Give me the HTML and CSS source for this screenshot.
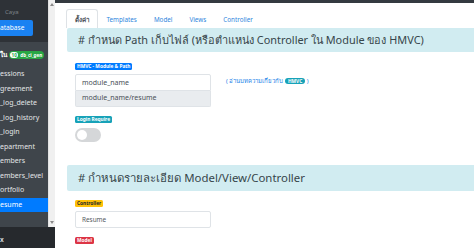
FILE: index.html
```html
<!DOCTYPE html>
<html lang="th">
<head>
  <meta charset="UTF-8">
  <title>HMVC Generator</title>
  <link rel="stylesheet" href="styles.css">
</head>
<body>
  <div class="app">
    <aside class="sidebar">
      <div class="side-scroll">
        <div class="side-main">
          <div class="brand">
            <div class="brand-name">Caya</div>
            <div class="db-btn">atabase</div>
          </div>
          <div class="menu">
            <div class="menu-head">ใน <span class="db-badge"><span class="pill">10</span>db_ci_gen</span></div>
            <a class="item" href="#">essions</a>
            <a class="item" href="#">greement</a>
            <a class="item" href="#">_log_delete</a>
            <a class="item" href="#">_log_history</a>
            <a class="item" href="#">_login</a>
            <a class="item" href="#">epartment</a>
            <a class="item" href="#">embers</a>
            <a class="item" href="#">embers_level</a>
            <a class="item" href="#">ortfolio</a>
            <a class="item active" href="#">esume</a>
          </div>
        </div>
        <div class="scrollbar">
          <span class="arrow up"></span>
          <span class="arrow down"></span>
        </div>
      </div>
      <div class="side-foot">x</div>
    </aside>

    <main class="main">
      <div class="topbar"></div>
      <div class="content">
        <nav class="tabs">
          <a class="tab active" href="#">ตั้งค่า</a>
          <a class="tab" href="#">Templates</a>
          <a class="tab" href="#">Model</a>
          <a class="tab" href="#">Views</a>
          <a class="tab" href="#">Controller</a>
        </nav>

        <h3 class="alert">#&nbsp;กำหนด Path เก็บไฟล์ (หรือตำแหน่ง Controller ใน Module ของ HMVC)</h3>

        <div class="group first">
          <span class="badge blue">HMVC - Module &amp; Path</span>
          <div class="field-row">
            <div class="input-stack">
              <div class="input">module_name</div>
              <div class="input readonly">module_name/resume</div>
            </div>
            <a class="read-link" href="#">( อ่านบทความเกี่ยวกับ <span class="badge teal pillish">HMVC</span> )</a>
          </div>
        </div>

        <div class="group login">
          <span class="badge teal">Login Require</span>
          <div class="toggle"><span class="knob"></span></div>
        </div>

        <h3 class="alert second">#&nbsp;กำหนดรายละเอียด Model/View/Controller</h3>

        <div class="group ctrl">
          <span class="badge yellow">Controller</span>
          <div class="input single">Resume</div>
        </div>

        <div class="group model">
          <span class="badge red">Model</span>
        </div>
      </div>
    </main>
  </div>
</body>
</html>
```

FILE: styles.css
```css
* { margin: 0; padding: 0; box-sizing: border-box; }
html, body { width: 474px; height: 248px; overflow: hidden; }
body { font-family: "Noto Sans", "Liberation Sans", sans-serif; background: #fff; color: #212529; }
a { text-decoration: none; color: inherit; }

.app { display: grid; grid-template-columns: 55px 1fr; height: 248px; }

/* sidebar */
.sidebar { display: flex; flex-direction: column; background: #26292d; overflow: hidden; }
.side-scroll { display: grid; grid-template-columns: 48px 7px; height: 227px; }
.side-main { display: flex; flex-direction: column; overflow: hidden; }

.brand { background: #2e3237; height: 42px; padding-top: 8px; }
.brand-name { font-size: 6px; line-height: 9px; color: #7d8389; padding-left: 5px; }
.db-btn { margin-top: 3px; width: 33px; height: 16px; background: #1a82f2; color: #fff; font-size: 6.6px; line-height: 16px; border-radius: 0 2px 2px 0; }

.menu { flex: 1; background: #3f454b; padding-top: 9px; }
.menu-head { display: flex; align-items: center; gap: 2px; height: 8px; font-size: 6.5px; font-weight: bold; color: #fff; white-space: nowrap; }
.db-badge { display: inline-flex; align-items: center; gap: 2px; height: 8px; padding: 0 2px 0 1px; background: #28a745; border-radius: 4px; font-size: 4.6px; color: #fff; }
.pill { background: #fff; color: #28a745; border-radius: 3px; padding: 0 1.5px; line-height: 6px; font-weight: bold; }
.menu-head + .item { margin-top: 8px; }
.item { display: block; height: 14.5px; line-height: 14.5px; font-size: 7px; color: #e3e5e7; white-space: nowrap; }
.item.active { background: #007bff; color: #fff; }

.scrollbar { background: #f0f0f0; display: flex; flex-direction: column; justify-content: space-between; align-items: center; padding: 3px 0; border-left: 1px solid #e2e2e2; }
.arrow { width: 0; height: 0; border-left: 2px solid transparent; border-right: 2px solid transparent; }
.arrow.up { border-bottom: 3px solid #8a8a8a; }
.arrow.down { border-top: 3px solid #8a8a8a; }

.side-foot { flex: 1; background: #26292d; color: #d0d3d6; font-size: 6.5px; font-weight: bold; padding-top: 8px; }

/* main */
.main { overflow: hidden; }
.topbar { height: 3px; background: #343a40; }
.content { padding-left: 12px; }

.tabs { display: flex; margin-top: 6px; height: 19px; margin-left: -1px; }
.tab { padding: 0 7.5px; font-size: 6.3px; line-height: 19px; color: #2f86dd; border: 1px solid transparent; border-bottom: none; border-radius: 3px 3px 0 0; }
.tab.active { color: #495057; border-color: #dee2e6; font-weight: bold; }

.alert { display: flex; align-items: center; height: 24px; margin-right: -12px; padding: 0 11px; background: #d1ecf1; color: #36454a; font-size: 10.9px; font-weight: normal; white-space: nowrap; border-radius: 2px; }
.alert.second { height: 26px; margin-top: 23px; font-size: 11.4px; }

.group { display: flex; flex-direction: column; align-items: flex-start; padding-left: 8px; }
.group.first { margin-top: 11px; }
.group.login { margin-top: 9px; }
.group.ctrl { margin-top: 9px; }
.group.model { margin-top: 9px; }

.badge { display: inline-block; font-size: 4.8px; line-height: 7px; font-weight: bold; padding: 0 2px; border-radius: 1.5px; color: #fff; }
.badge.blue { background: #007bff; }
.badge.teal { background: #17a2b8; }
.badge.yellow { background: #ffc107; color: #212529; }
.badge.red { background: #dc3545; }
.badge.pillish { border-radius: 3px; padding: 0 3px; vertical-align: middle; line-height: 6px; }

.field-row { display: flex; align-items: flex-start; gap: 15px; margin-top: 4px; }
.input-stack { width: 136px; }
.input { height: 17px; padding: 0 6px; border: 1px solid #dfe3e7; font-size: 7px; line-height: 15px; color: #495057; background: #fff; border-radius: 2px 2px 0 0; }
.input.readonly { height: 16px; line-height: 14px; background: #e9ecef; border-top: none; border-radius: 0 0 2px 2px; }
.input.single { width: 136px; margin-top: 4px; font-size: 6.4px; color: #555c63; border-radius: 2px; }
.read-link { margin-top: 3px; font-size: 6px; line-height: 8px; color: #1a7fe8; white-space: nowrap; }

.toggle { display: flex; align-items: center; width: 26px; height: 14px; margin-top: 5px; padding: 0 2px; background: #d5d7d9; border-radius: 7px; }
.knob { width: 10px; height: 10px; border-radius: 50%; background: #fff; }
```
